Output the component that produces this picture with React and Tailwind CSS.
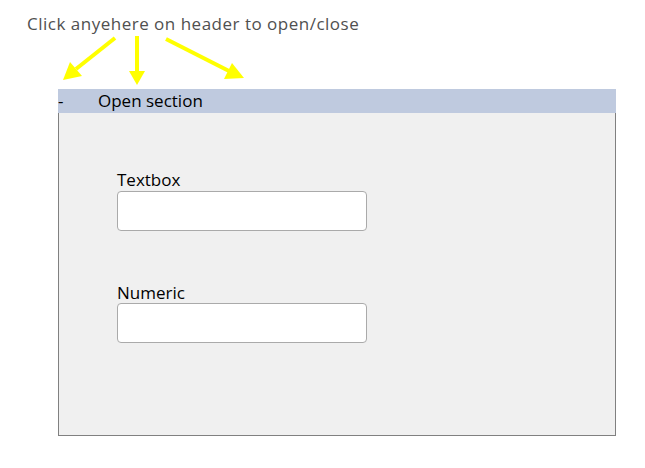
import { useState } from 'react'

const font = { fontFamily: '"Open Sans", "Noto Sans", sans-serif' }

function Arrows() {
  // yellow hint arrows pointing at the header
  return (
    <svg className="absolute left-0 top-0 pointer-events-none" width="260" height="90">
      <g stroke="#ffff00" strokeWidth="4" strokeLinecap="butt" fill="#ffff00">
        <line x1="115" y1="38" x2="76" y2="69" />
        <polygon points="63,80 70,62 82,76" stroke="none" />
        <line x1="137" y1="36" x2="137" y2="72" />
        <polygon points="137,85 129,71 145,71" stroke="none" />
        <line x1="166" y1="39" x2="229" y2="71" />
        <polygon points="244,78 224,79 232,63" stroke="none" />
      </g>
    </svg>
  )
}

export default function App() {
  const [open, setOpen] = useState(true)

  return (
    <div className="relative w-[645px] h-[468px] bg-white" style={font}>
      <p className="absolute left-[27px] top-[13px] text-[17px] tracking-[0.5px] text-[#505050] leading-[22px]">
        Click anyehere on header to open/close
      </p>
      <Arrows />

      <div className="pt-[89px] pl-[58px]">
        <div className="w-[558px]">
          <div
            onClick={() => setOpen(!open)}
            className="flex items-center h-[24px] bg-[#bfcadf] text-[17px] text-black cursor-pointer select-none"
          >
            <span className="w-[40px]">{open ? '-' : '+'}</span>
            <span>Open section</span>
          </div>
          {open && (
            <div className="h-[323px] bg-[#f0f0f0] border-x border-b border-[#808080] pl-[58px] pt-[57px]">
              <label className="block text-[17px] text-black leading-[20px]">Textbox</label>
              <input
                type="text"
                className="block mt-[1px] w-[250px] h-[40px] bg-white border border-[#aaa] rounded-[4px]"
              />
              <label className="block mt-[52px] text-[17px] text-black leading-[20px]">Numeric</label>
              <input
                type="number"
                className="block w-[250px] h-[40px] bg-white border border-[#aaa] rounded-[4px]"
              />
            </div>
          )}
        </div>
      </div>
    </div>
  )
}
